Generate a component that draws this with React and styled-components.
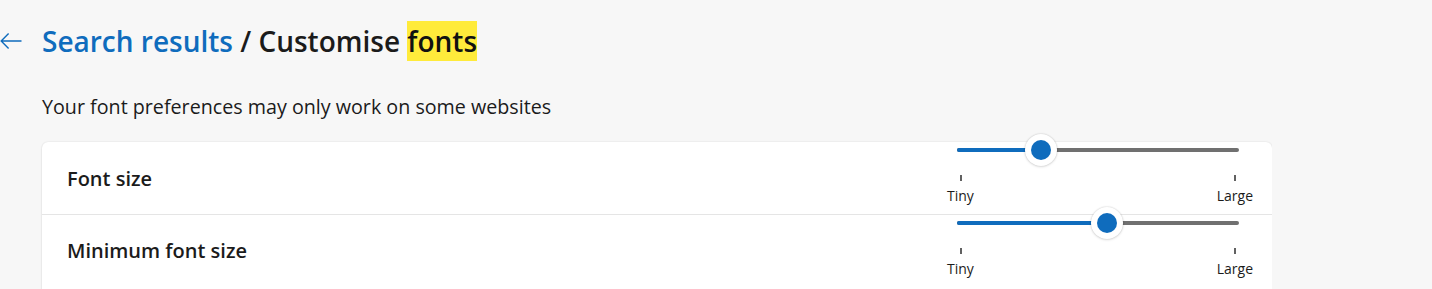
import React from 'react';
import styled, { createGlobalStyle } from 'styled-components';

const GlobalStyle = createGlobalStyle`
  html, body {
    margin: 0;
    padding: 0;
    background: #f7f7f7;
  }
  body {
    font-family: "Open Sans", "Noto Sans", sans-serif;
    color: #1b1b1b;
    overflow: hidden;
  }
`;

const Page = styled.div`
  width: 1272px;
  height: 289px;
  overflow: hidden;
`;

const Header = styled.div`
  display: flex;
  align-items: center;
  height: 40px;
  padding-top: 21px;
`;

const BackButton = styled.button`
  width: 42px;
  height: 40px;
  padding: 0;
  border: none;
  background: transparent;
  display: flex;
  align-items: center;
  justify-content: flex-start;
  cursor: pointer;
`;

const Title = styled.h1`
  margin: 0;
  font-size: 28px;
  line-height: 40px;
  font-weight: 600;
  color: #1b1b1b;
  white-space: nowrap;

  a {
    color: #0f6cbd;
    text-decoration: none;
  }

  mark {
    background: #ffeb3b;
    color: #111;
    padding: 1px 0;
  }
`;

const Content = styled.div`
  padding-left: 42px;
`;

const Subtitle = styled.p`
  margin: 32px 0 0;
  font-size: 19.7px;
  line-height: 28px;
  color: #1b1b1b;
`;

const Card = styled.div`
  margin-top: 21px;
  padding-bottom: 40px;
  background: #fff;
  border-radius: 6px;
  box-shadow: 0 0 2px rgba(0, 0, 0, 0.12), 0 1px 2px rgba(0, 0, 0, 0.08);
`;

const Row = styled.div`
  display: flex;
  align-items: flex-start;
  justify-content: space-between;
  height: 72px;
  padding: 0 33px 0 25px;
  border-top: ${p => (p.$first ? 'none' : '1px solid #e5e5e5')};
`;

const Label = styled.div`
  font-size: 20px;
  font-weight: 600;
  line-height: 28px;
  margin-top: ${p => (p.$first ? 23 : 22)}px;
`;

const SliderBlock = styled.div`
  width: 282px;
  display: flex;
  flex-direction: column;
`;

const TrackArea = styled.div`
  position: relative;
  height: 16px;
`;

const Track = styled.div`
  position: absolute;
  left: 0;
  right: 0;
  top: 6px;
  height: 4px;
  border-radius: 2px;
  background: #707070;
`;

const Fill = styled.div`
  position: absolute;
  left: 0;
  top: 6px;
  height: 4px;
  border-radius: 2px;
  background: #0f6cbd;
`;

const Thumb = styled.div`
  position: absolute;
  top: -8px;
  width: 32px;
  height: 32px;
  margin-left: -16px;
  border-radius: 50%;
  background: #fff;
  box-shadow: 0 0 2px rgba(0, 0, 0, 0.2), 0 1px 3px rgba(0, 0, 0, 0.1);
  display: flex;
  align-items: center;
  justify-content: center;

  &::after {
    content: '';
    width: 20px;
    height: 20px;
    border-radius: 50%;
    background: #0f6cbd;
  }
`;

const Ticks = styled.div`
  display: flex;
  justify-content: space-between;
  padding: 0 3px;
  margin-top: 17px;
`;

const Tick = styled.span`
  width: 2px;
  height: 6px;
  background: #616161;
`;

const Scale = styled.div`
  display: flex;
  justify-content: space-between;
  margin: 5px -14px 0 -10px;
  font-size: 14px;
  line-height: 20px;
  color: #1b1b1b;
`;

const ArrowIcon = () => (
  <svg width="22" height="18" viewBox="0 0 22 18" fill="none">
    <path d="M21.5 9H1.2M8.6 1.6L1.2 9l7.4 7.4" stroke="#0f6cbd" strokeWidth="1.4" />
  </svg>
);

const Slider = ({ value }) => {
  const pct = 3 + value * 276;
  return (
    <SliderBlock>
      <TrackArea>
        <Track />
        <Fill style={{ width: pct }} />
        <Thumb style={{ left: pct }} />
      </TrackArea>
      <Ticks>
        <Tick />
        <Tick />
      </Ticks>
      <Scale>
        <span>Tiny</span>
        <span>Large</span>
      </Scale>
    </SliderBlock>
  );
};

const settings = [
  { label: 'Font size', value: 0.293 },
  { label: 'Minimum font size', value: 0.533 },
];

export default function App() {
  return (
    <Page>
      <GlobalStyle />
      <Header>
        <BackButton aria-label="Back">
          <ArrowIcon />
        </BackButton>
        <Title>
          <a href="#">Search results</a> / Customise <mark>fonts</mark>
        </Title>
      </Header>
      <Content>
        <Subtitle>Your font preferences may only work on some websites</Subtitle>
        <Card>
          {settings.map((s, i) => (
            <Row key={s.label} $first={i === 0}>
              <Label $first={i === 0}>{s.label}</Label>
              <Slider value={s.value} />
            </Row>
          ))}
        </Card>
      </Content>
    </Page>
  );
}
